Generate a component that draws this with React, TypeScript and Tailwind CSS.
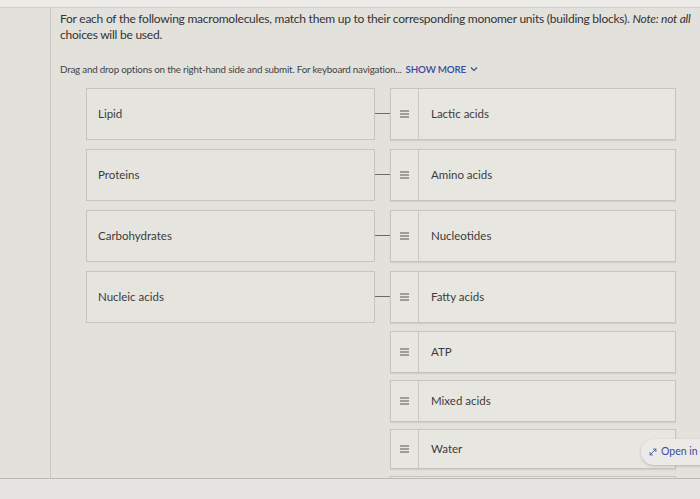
import { MoveDiagonal } from 'lucide-react';

const pairs = [
  { left: 'Lipid', right: 'Lactic acids' },
  { left: 'Proteins', right: 'Amino acids' },
  { left: 'Carbohydrates', right: 'Nucleotides' },
  { left: 'Nucleic acids', right: 'Fatty acids' },
];

const extras = [
  { label: 'ATP', h: 'h-[42px]' },
  { label: 'Mixed acids', h: 'h-[42px]' },
  { label: 'Water', h: 'h-[40px]' },
  { label: '', h: 'h-[40px]' },
];

function Handle() {
  return (
    <div className="flex w-[28px] shrink-0 items-center justify-center border-r border-[#c9c7c1]">
      <svg width="9" height="8" viewBox="0 0 9 8" className="text-[#555]">
        <path d="M0 1h9M0 4h9M0 7h9" stroke="currentColor" strokeWidth="1.1" />
      </svg>
    </div>
  );
}

function Choice({ label, h }: { label: string; h: string }) {
  return (
    <div className={`flex ${h} w-[286px] items-stretch border border-[#c6c4be] bg-[#e8e6e1] shadow-[0_1px_1px_rgba(0,0,0,0.08)]`}>
      <Handle />
      <div className="flex items-center pl-[12px] text-[11.5px] text-[#3c3c3c]">{label}</div>
    </div>
  );
}

export default function App() {
  return (
    <div className="relative h-[499px] w-[700px] overflow-hidden bg-[#e3e1dc] font-['Lato',sans-serif]">
      <div className="h-[8px] border-b border-[#d2d0cb] bg-[#ecebe7]" />
      <div className="relative h-[470px] overflow-hidden">
        <div className="absolute left-[50px] top-0 h-full w-px bg-[#c9c7c2]" />
        <div className="pl-[60px] pr-[4px] pt-[3px]">
          <p className="text-[12px] leading-[16px] tracking-[-0.24px] text-[#333]">
            For each of the following macromolecules, match them up to their corresponding monomer units (building blocks). <span className="italic">Note: not all</span>
            <br />
            choices will be used.
          </p>
          <p className="mt-[19px] flex items-center text-[9.8px] tracking-[-0.2px] text-[#444]">
            Drag and drop options on the right-hand side and submit. For keyboard navigation...
            <span className="ml-[4px] font-semibold text-[#3a4aa0]">SHOW MORE</span>
            <svg width="8" height="6" viewBox="0 0 8 6" className="ml-[4px] text-[#3a4aa0]">
              <path d="M1 1.5l3 3 3-3" fill="none" stroke="currentColor" strokeWidth="1.2" />
            </svg>
          </p>
        </div>

        <div className="ml-[86px] mt-[11px] flex flex-col gap-[9px]">
          {pairs.map((p) => (
            <div key={p.left} className="flex h-[52px] items-stretch">
              <div className="flex w-[289px] items-center border border-[#c6c4be] bg-[#e6e4df] pl-[11px] text-[11.5px] text-[#3c3c3c]">
                {p.left}
              </div>
              <div className="flex w-[15px] items-center">
                <div className="h-px w-full bg-[#6a6a6a]" />
              </div>
              <Choice label={p.right} h="h-[52px]" />
            </div>
          ))}
        </div>
        <div className="ml-[390px] mt-[8px] flex flex-col gap-[7px]">
          {extras.map((e, i) => (
            <Choice key={i} label={e.label} h={e.h} />
          ))}
        </div>

        <div className="absolute left-[641px] top-[431px] flex h-[26px] w-[64px] items-center gap-[3px] rounded-l-full bg-[#ebeae7] pl-[7px] shadow-[0_1px_3px_rgba(0,0,0,0.2)]">
          <MoveDiagonal size={10} className="shrink-0 text-[#3a4aa0]" strokeWidth={2} />
          <span className="whitespace-nowrap text-[10.5px] text-[#3a4aa0]">Open in</span>
        </div>
      </div>
      <div className="h-[21px] border-t border-[#bcbab5] bg-[#e6e5e1]" />
    </div>
  );
}
